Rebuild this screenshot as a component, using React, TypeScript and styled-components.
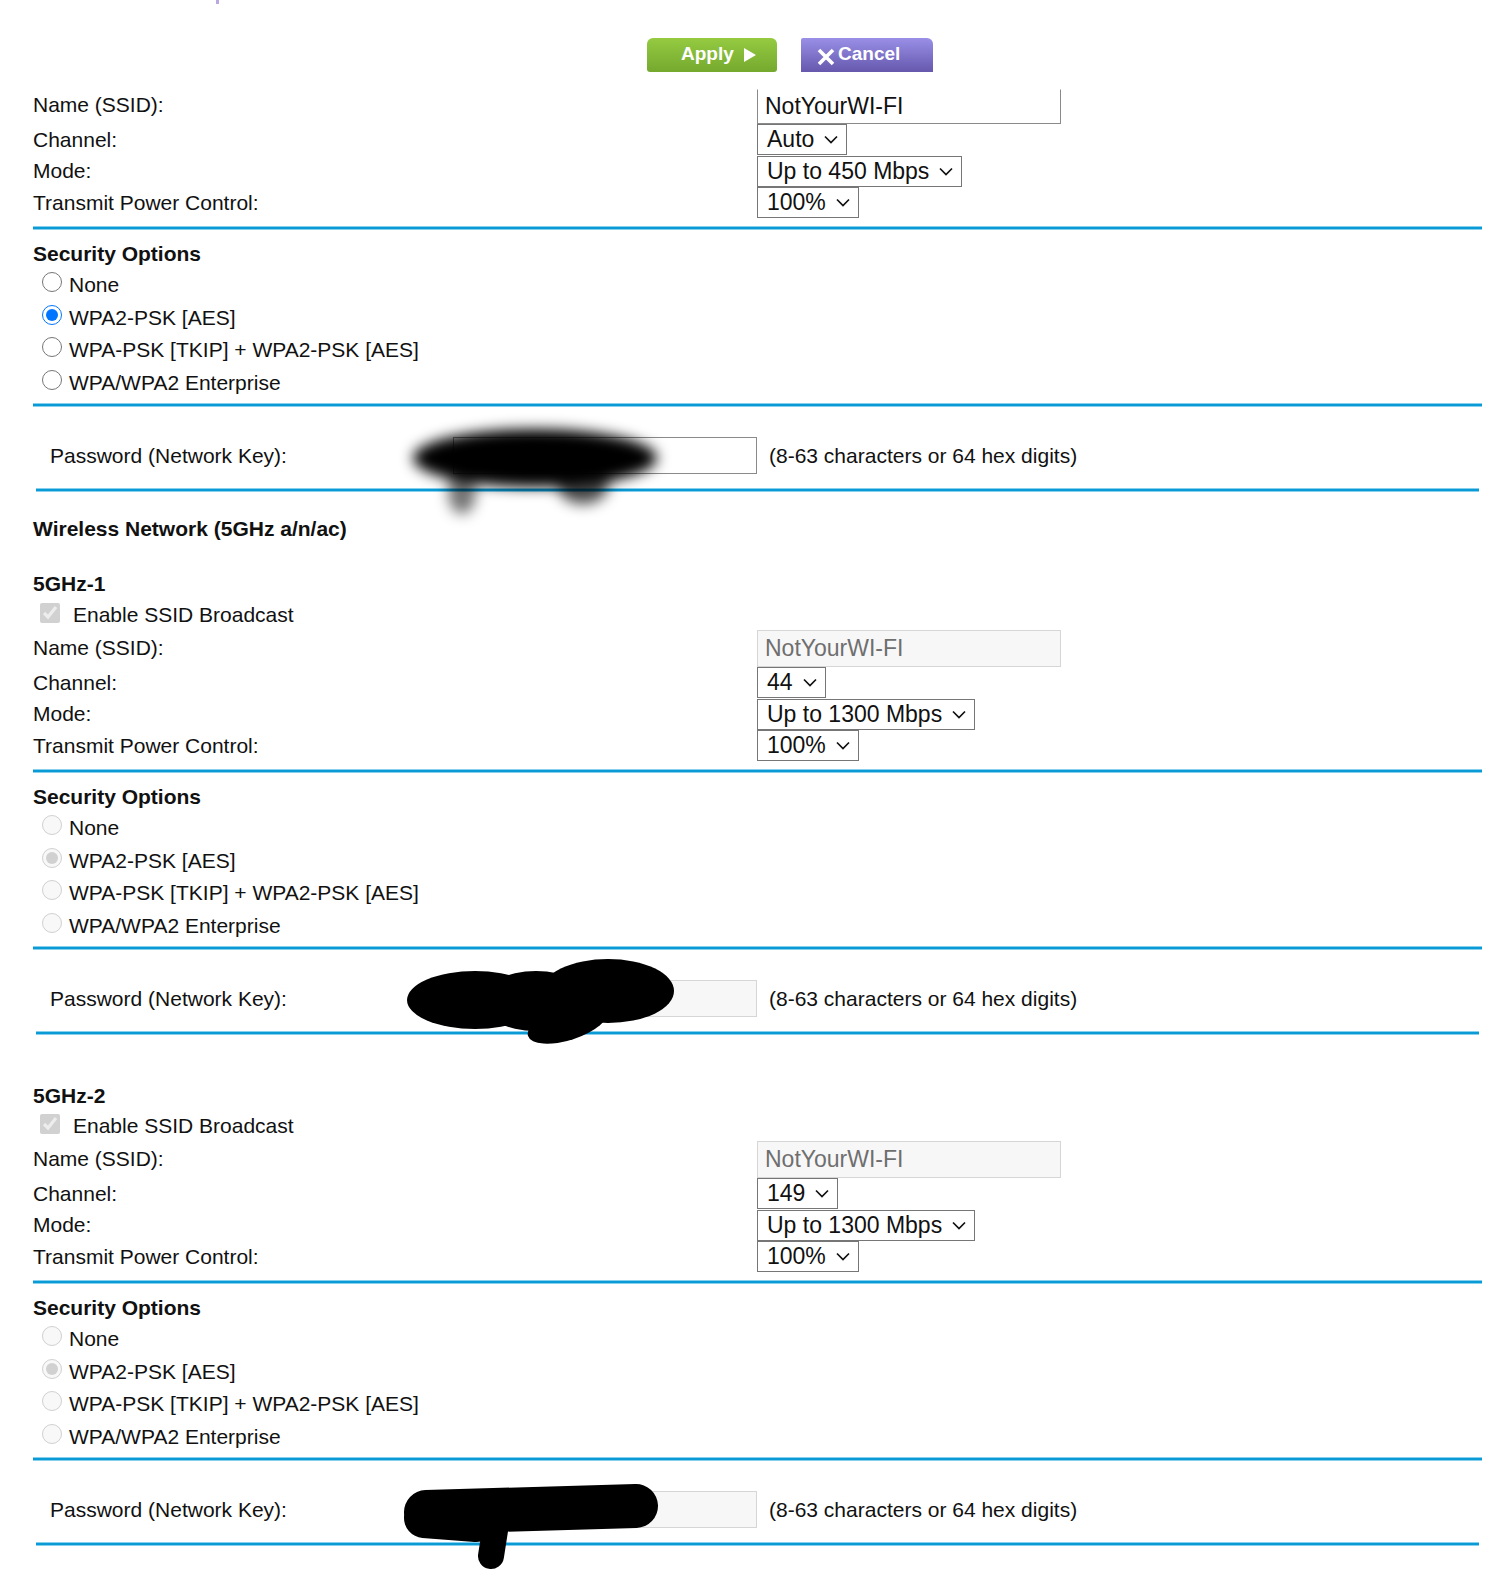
import React from 'react';
import styled, { createGlobalStyle } from 'styled-components';

const GlobalStyle = createGlobalStyle`
  html, body {
    margin: 0;
    padding: 0;
    background: #ffffff;
  }
  body {
    font-family: 'Liberation Sans', Arial, sans-serif;
    color: #111111;
  }
`;

const Page = styled.div`
  width: 1485px;
  box-sizing: border-box;
  padding: 0 3px 40px 33px;
  font-size: 21px;
`;

const Header = styled.div`
  display: flex;
  flex-direction: column;
  height: 86px;
`;

const TabMark = styled.span`
  display: block;
  width: 3px;
  height: 4px;
  margin-left: 183px;
  background: #b9a8e4;
`;

const ButtonBar = styled.div`
  display: flex;
  gap: 24px;
  margin-top: 34px;
  padding-left: 614px;
`;

const ActionButton = styled.button<{ $variant: 'apply' | 'cancel' }>`
  display: flex;
  align-items: center;
  width: ${({ $variant }) => ($variant === 'apply' ? '130px' : '132px')};
  height: 34px;
  border: none;
  box-sizing: border-box;
  padding: ${({ $variant }) => ($variant === 'apply' ? '0 0 0 34px' : '0 0 0 16px')};
  gap: ${({ $variant }) => ($variant === 'apply' ? '10px' : '3px')};
  font-family: 'Liberation Sans', Arial, sans-serif;
  font-weight: bold;
  font-size: 19px;
  color: #ffffff;
  cursor: pointer;
  border-radius: ${({ $variant }) => ($variant === 'apply' ? '6px 6px 3px 3px' : '2px 6px 0 0')};
  background: ${({ $variant }) =>
    $variant === 'apply'
      ? 'linear-gradient(#95ca41, #74a92f)'
      : 'linear-gradient(#9a8fe7, #6558ad)'};
  & > span {
    margin-top: -3px;
  }
`;

const Row = styled.div<{ $h: number }>`
  display: grid;
  grid-template-columns: 724px auto;
  align-items: center;
  height: ${({ $h }) => $h}px;
`;

const Label = styled.span`
  white-space: nowrap;
`;

const TextInput = styled.input<{ $clipTop?: boolean }>`
  width: 304px;
  height: ${({ $clipTop }) => ($clipTop ? '35px' : '37px')};
  align-self: ${({ $clipTop }) => ($clipTop ? 'end' : 'center')};
  box-sizing: border-box;
  padding: 0 7px;
  font-family: 'Liberation Sans', Arial, sans-serif;
  font-size: 23px;
  color: #111111;
  background: #ffffff;
  border: 1px solid #8a8a8a;
  border-top-color: ${({ $clipTop }) => ($clipTop ? '#ffffff' : '#8a8a8a')};
  outline: none;
  &:disabled {
    background: #f7f7f7;
    border-color: #d6d6d6;
    color: #6f6f6f;
  }
`;

const SelectBox = styled.div`
  display: inline-flex;
  align-items: center;
  justify-self: start;
  gap: 10px;
  height: 31px;
  box-sizing: border-box;
  padding: 0 8px 0 9px;
  border: 1px solid #767676;
  background: #ffffff;
  font-size: 23px;
  color: #111111;
  white-space: nowrap;
`;

const Divider = styled.div<{ $gap?: number }>`
  height: 4px;
  margin-top: ${({ $gap }) => $gap ?? 0}px;
  background: linear-gradient(#86d0ee 0, #86d0ee 1px, #0a9ad5 1px, #0a9ad5 3px, #86d0ee 3px);
`;

const SectionTitle = styled.div<{ $top?: number; $lh?: number }>`
  font-weight: bold;
  line-height: ${({ $lh }) => $lh ?? 32}px;
  margin-top: ${({ $top }) => $top ?? 0}px;
`;

const RadioList = styled.div`
  display: flex;
  flex-direction: column;
  padding-top: 9px;
  padding-bottom: 4px;
`;

const RadioRow = styled.label`
  display: flex;
  align-items: center;
  gap: 7px;
  height: 32.5px;
  padding-left: 9px;
`;

const Radio = styled.input`
  width: 20px;
  height: 20px;
  margin: 0;
  transform: translateY(-3px);
`;

const CheckRow = styled.label<{ $h: number }>`
  display: flex;
  align-items: center;
  gap: 13px;
  height: ${({ $h }) => $h}px;
  padding-left: 7px;
`;

const Check = styled.input`
  width: 20px;
  height: 20px;
  margin: 0;
  transform: translateY(-2px);
`;

const PasswordBox = styled.div`
  position: relative;
  margin: 0 3px;
`;

const PasswordRow = styled.div`
  display: flex;
  align-items: center;
  padding: 30px 0 14px 14px;
`;

const PasswordLabel = styled.span`
  width: 403px;
  white-space: nowrap;
`;

const Hint = styled.span`
  margin-left: 12px;
  white-space: nowrap;
`;

const Scribble = styled.svg`
  position: absolute;
  left: 360px;
  top: 15px;
  width: 300px;
  height: 110px;
  overflow: visible;
  pointer-events: none;
`;

const Chevron = () => (
  <svg width="14" height="9" viewBox="0 0 14 9" fill="none">
    <polyline points="1,1.5 7,7.5 13,1.5" stroke="#111" strokeWidth="1.7" />
  </svg>
);

const PlayIcon = () => (
  <svg width="12" height="14" viewBox="0 0 12 14">
    <polygon points="0,0 12,7 0,14" fill="#ffffff" />
  </svg>
);

const CrossIcon = () => (
  <svg width="18" height="18" viewBox="0 0 18 18" style={{ marginTop: 4 }}>
    <path d="M2 2 L16 16 M16 2 L2 16" stroke="#ffffff" strokeWidth="3.6" />
  </svg>
);

const BlurScribble = () => (
  <Scribble viewBox="0 0 300 110">
    <defs>
      <filter id="spray" x="-20%" y="-50%" width="140%" height="200%">
        <feGaussianBlur stdDeviation="7" />
      </filter>
    </defs>
    <g filter="url(#spray)" fill="#000">
      <ellipse cx="139" cy="36" rx="122" ry="29" />
      <ellipse cx="139" cy="36" rx="106" ry="22" />
      <ellipse cx="66" cy="70" rx="14" ry="22" opacity="0.55" />
      <ellipse cx="187" cy="62" rx="26" ry="20" opacity="0.7" />
    </g>
  </Scribble>
);

const BlobScribble = () => (
  <Scribble viewBox="0 0 300 110">
    <g fill="#000">
      <ellipse cx="79" cy="35" rx="68" ry="29" />
      <ellipse cx="140" cy="36" rx="55" ry="30" />
      <ellipse cx="212" cy="26" rx="66" ry="32" />
      <ellipse cx="172" cy="58" rx="42" ry="17" transform="rotate(-18 172 58)" />
    </g>
  </Scribble>
);

const StrokeScribble = () => (
  <Scribble viewBox="0 0 300 110">
    <g stroke="#000" strokeLinecap="round" fill="none">
      <path d="M30 36 L240 30" strokeWidth="44" />
      <path d="M28 42 L80 46" strokeWidth="40" />
      <path d="M100 48 L95 80" strokeWidth="26" />
    </g>
  </Scribble>
);

type Band = {
  channel: string;
  mode: string;
  disabled: boolean;
  scribble: React.ReactNode;
  clipTop?: boolean;
};

const securityOptions = ['None', 'WPA2-PSK [AES]', 'WPA-PSK [TKIP] + WPA2-PSK [AES]', 'WPA/WPA2 Enterprise'];

const BandFields: React.FC<{ band: Band; name: string }> = ({ band, name }) => (
  <>
    <Row $h={38}>
      <Label>Name (SSID):</Label>
      <TextInput defaultValue="NotYourWI-FI" disabled={band.disabled} $clipTop={band.clipTop} />
    </Row>
    <Row $h={31}>
      <Label>Channel:</Label>
      <SelectBox>
        {band.channel}
        <Chevron />
      </SelectBox>
    </Row>
    <Row $h={32}>
      <Label>Mode:</Label>
      <SelectBox>
        {band.mode}
        <Chevron />
      </SelectBox>
    </Row>
    <Row $h={31}>
      <Label>Transmit Power Control:</Label>
      <SelectBox>
        100%
        <Chevron />
      </SelectBox>
    </Row>
    <Divider $gap={8} />
    <RadioList>
      <SectionTitle $lh={30}>Security Options</SectionTitle>
      {securityOptions.map((opt, i) => (
        <RadioRow key={opt}>
          <Radio type="radio" name={name} defaultChecked={i === 1} disabled={band.disabled} />
          {opt}
        </RadioRow>
      ))}
    </RadioList>
    <Divider />
    <PasswordBox>
      <PasswordRow>
        <PasswordLabel>Password (Network Key):</PasswordLabel>
        <TextInput disabled={band.disabled} />
        <Hint>(8-63 characters or 64 hex digits)</Hint>
      </PasswordRow>
      <Divider />
      {band.scribble}
    </PasswordBox>
  </>
);

const App: React.FC = () => (
  <>
    <GlobalStyle />
    <Page>
      <Header>
        <TabMark />
        <ButtonBar>
          <ActionButton $variant="apply">
            <span>Apply</span>
            <PlayIcon />
          </ActionButton>
          <ActionButton $variant="cancel">
            <CrossIcon />
            <span>Cancel</span>
          </ActionButton>
        </ButtonBar>
      </Header>

      <BandFields
        name="sec24"
        band={{ channel: 'Auto', mode: 'Up to 450 Mbps', disabled: false, clipTop: true, scribble: <BlurScribble /> }}
      />

      <SectionTitle $top={21}>Wireless Network (5GHz a/n/ac)</SectionTitle>

      <SectionTitle $top={23}>5GHz-1</SectionTitle>
      <CheckRow $h={29}>
        <Check type="checkbox" defaultChecked disabled />
        Enable SSID Broadcast
      </CheckRow>
      <BandFields
        name="sec5a"
        band={{ channel: '44', mode: 'Up to 1300 Mbps', disabled: true, scribble: <BlobScribble /> }}
      />

      <SectionTitle $top={45}>5GHz-2</SectionTitle>
      <CheckRow $h={28}>
        <Check type="checkbox" defaultChecked disabled />
        Enable SSID Broadcast
      </CheckRow>
      <BandFields
        name="sec5b"
        band={{ channel: '149', mode: 'Up to 1300 Mbps', disabled: true, scribble: <StrokeScribble /> }}
      />
    </Page>
  </>
);

export default App;
